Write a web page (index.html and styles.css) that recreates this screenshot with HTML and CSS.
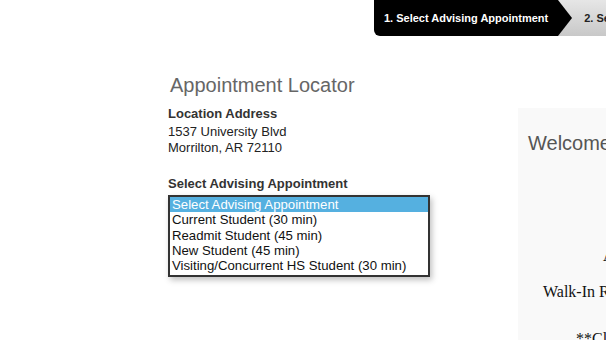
FILE: index.html
```html
<!DOCTYPE html>
<html lang="en">
<head>
    <meta charset="UTF-8">
    <meta name="viewport" content="width=device-width, initial-scale=1.0">
    <title>Appointment Locator</title>
    <link rel="stylesheet" href="styles.css">
</head>
<body>
    <div class="steps">
        <div class="step active">1. Select Advising Appointment</div>
        <div class="step">2. Select Date &amp; Time</div>
    </div>

    <div class="main">
        <div class="locator">
            <h1>Appointment Locator</h1>
            <div class="label">Location Address</div>
            <div class="address">
                1537 University Blvd<br>
                Morrilton, AR 72110
            </div>

            <div class="label select-label">Select Advising Appointment</div>
            <ul class="listbox" id="types">
                <li class="selected">Select Advising Appointment</li>
                <li>Current Student (30 min)</li>
                <li>Readmit Student (45 min)</li>
                <li>New Student (45 min)</li>
                <li>Visiting/Concurrent HS Student (30 min)</li>
            </ul>
        </div>

        <div class="welcome">
            <h2>Welcome</h2>
            <p class="line-a">Appointments are available</p>
            <p class="line-b">Walk-In Registration Hours</p>
            <p class="line-c">**Closed on holidays**</p>
        </div>
    </div>

    <script>
        document.querySelectorAll('#types li').forEach(item => {
            item.addEventListener('click', () => {
                document.querySelectorAll('#types li').forEach(li => li.classList.remove('selected'));
                item.classList.add('selected');
            });
        });
    </script>
</body>
</html>
```

FILE: styles.css
```css
body {
    margin: 0;
    font-family: "Liberation Sans", Arial, sans-serif;
    background-color: #fff;
    overflow: hidden;
}

.steps {
    display: flex;
    width: 900px;
    height: 36px;
    padding-left: 374px;
}

.step {
    flex-shrink: 0;
    display: flex;
    align-items: center;
    white-space: nowrap;
    font-size: 11px;
    font-weight: bold;
    color: #222;
    padding-left: 26px;
    width: 200px;
    background: linear-gradient(#e6e6e6, #c8c8c8);
}

.step.active {
    position: relative;
    z-index: 1;
    width: auto;
    padding: 0 10px 0 10px;
    color: #fff;
    background: #000;
    border-radius: 0 0 0 6px;
}

.step.active::after {
    content: "";
    position: absolute;
    right: -14px;
    top: 0;
    border-top: 18px solid transparent;
    border-bottom: 18px solid transparent;
    border-left: 14px solid #000;
}

.main {
    display: flex;
    width: 1000px;
    padding-left: 168px;
    margin-top: 38px;
}

.locator {
    flex-shrink: 0;
    width: 350px;
}

h1 {
    font-size: 20px;
    font-weight: normal;
    color: #666;
    margin: 0 0 9px 2px;
}

.label {
    font-size: 13px;
    font-weight: bold;
    color: #333;
}

.address {
    font-size: 13px;
    color: #222;
    line-height: 16px;
    margin-top: 3px;
}

.select-label {
    margin-top: 20px;
}

.listbox {
    list-style: none;
    margin: 4px 0 0 0;
    padding: 0 0 2px 0;
    width: 258px;
    border: 2px solid #333;
    box-shadow: 2px 3px 6px rgba(0, 0, 0, 0.25);
    font-size: 13.2px;
    color: #111;
}

.listbox li {
    height: 15.25px;
    line-height: 15.25px;
    padding-left: 2px;
    white-space: nowrap;
    cursor: default;
}

.listbox li.selected {
    background-color: #55b0e0;
    color: #fff;
}

.welcome {
    flex-shrink: 0;
    width: 320px;
    height: 240px;
    margin-top: 34px;
    padding: 0 10px;
    background-color: #f9f9f9;
    font-family: "Liberation Serif", "Times New Roman", serif;
    font-size: 16px;
    color: #111;
}

.welcome h2 {
    font-family: "Liberation Sans", Arial, sans-serif;
    font-size: 20px;
    font-weight: normal;
    color: #555;
    margin: 24px 0 0 0;
}

.welcome p {
    margin: 0;
    white-space: nowrap;
}

.line-a {
    padding-top: 92px;
    padding-left: 75px;
}

.line-b {
    padding-top: 18px;
    padding-left: 15px;
}

.line-c {
    padding-top: 29px;
    padding-left: 48px;
}
```
